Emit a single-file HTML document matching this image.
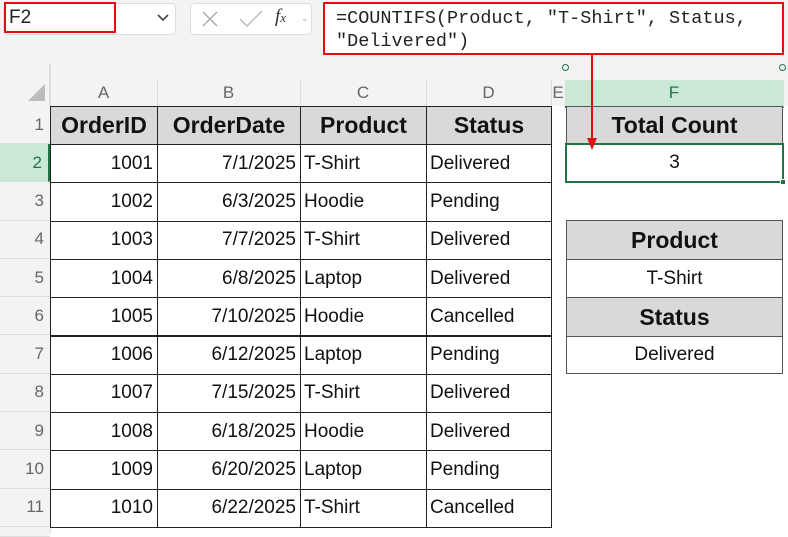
<!DOCTYPE html><html><head><style>
body{margin:0;width:788px;height:534px;background:#fff;position:relative;overflow:hidden;font-family:"Liberation Sans",Arial,sans-serif}
.a{position:absolute;box-sizing:border-box}
.c{position:absolute;box-sizing:border-box;border:1px solid #222;font-size:19px;color:#111;display:flex;align-items:center;white-space:nowrap;overflow:hidden}
.h{background:#d9d9d9;font-weight:bold;font-size:23px;justify-content:center}
.r{justify-content:flex-end;padding-right:4px}
.l{padding-left:3px}
.m{justify-content:center}
.rh{position:absolute;left:0;width:50px;text-align:right;padding-right:6px;box-sizing:border-box;color:#666;font-size:17px;display:flex;align-items:center;justify-content:flex-end;border-bottom:1px solid #ddd;background:#f3f3f3}
.ch{position:absolute;top:80px;height:26px;color:#666;font-size:17px;display:flex;align-items:center;justify-content:center;border-right:1px solid #ddd}
</style></head><body>
<div class="a" style="left:0;top:0;width:788px;height:60px;background:#f3f3f3"></div>
<div class="a" style="left:3px;top:3px;width:173px;height:32px;background:#fff;border:1px solid #ddd;border-radius:5px"></div>
<div class="a" style="left:4px;top:2px;width:112px;height:31px;border:2px solid #e01010"></div>
<div class="a" style="left:9px;top:7px;font-size:19px;color:#222">F2</div>
<svg class="a" style="left:156px;top:13px" width="14" height="10"><path d="M2 2l5 5 5-5" stroke="#444" stroke-width="1.6" fill="none"/></svg>
<div class="a" style="left:190px;top:3px;width:122px;height:32px;background:#fff;border:1px solid #ddd;border-radius:5px"></div>
<svg class="a" style="left:200px;top:9px" width="20" height="20"><path d="M3 3l14 14M17 3L3 17" stroke="#aaa" stroke-width="1.5"/></svg>
<svg class="a" style="left:238px;top:9px" width="26" height="20"><path d="M2 10l7 7L24 2" stroke="#bbb" stroke-width="1.5" fill="none"/></svg>
<div class="a" style="left:275px;top:6px;font-size:19px;font-style:italic;font-family:'Liberation Serif',serif;color:#333">f<span style="font-size:13px">x</span></div>
<div class="a" style="left:301px;top:13px;font-size:9px;color:#aaa">⌄</div>
<div class="a" style="left:323px;top:2px;width:461px;height:53px;background:#fff;border:2px solid #e01010"></div>
<div class="a" style="left:336px;top:7px;font-family:'Liberation Mono',monospace;font-size:18.5px;line-height:23px;color:#222;white-space:pre">=COUNTIFS(Product, "T-Shirt", Status,
"Delivered")</div>
<div class="a" style="left:0;top:60px;width:50px;height:474px;background:#f3f3f3"></div>
<div class="a" style="left:0;top:60px;width:788px;height:46px;background:#f3f3f3"></div>
<div class="a" style="left:49px;top:64px;width:2px;height:470px;background:#ddd"></div>
<svg class="a" style="left:28px;top:84px" width="18" height="18"><path d="M17 0V17H0Z" fill="#bbb"/></svg>
<div class="ch" style="left:50px;width:107px">A</div>
<div class="ch" style="left:157px;width:143px">B</div>
<div class="ch" style="left:300px;width:126px">C</div>
<div class="ch" style="left:426px;width:125px">D</div>
<div class="ch" style="left:551px;width:14px">E</div>
<div class="ch" style="left:565px;width:218px;background:#c9e8d5;color:#217346;border-bottom:2px solid #217346">F</div>
<div class="a" style="left:562px;top:64px;width:7px;height:7px;border:1.5px solid #217346;border-radius:50%"></div>
<div class="a" style="left:779px;top:64px;width:7px;height:7px;border:1.5px solid #217346;border-radius:50%"></div>
<div id="g"></div>
<script>
var rows=[["OrderID","OrderDate","Product","Status"],["1001","7/1/2025","T-Shirt","Delivered"],["1002","6/3/2025","Hoodie","Pending"],["1003","7/7/2025","T-Shirt","Delivered"],["1004","6/8/2025","Laptop","Delivered"],["1005","7/10/2025","Hoodie","Cancelled"],["1006","6/12/2025","Laptop","Pending"],["1007","7/15/2025","T-Shirt","Delivered"],["1008","6/18/2025","Hoodie","Delivered"],["1009","6/20/2025","Laptop","Pending"],["1010","6/22/2025","T-Shirt","Cancelled"]];
var xs=[50,157,300,426,551],h="";
for(var i=0;i<11;i++){var t=i==0?106:144+(i-1)*38.3,hh=i==0?38:38.3;
h+='<div class="rh" style="top:'+t+'px;height:'+hh+'px;'+(i==1?'background:#c9e8d5;color:#217346;border-right:2px solid #217346':'')+'">'+(i+1)+'</div>';
for(var j=0;j<4;j++){var cl=i==0?'h':(j<2?'r':'l');h+='<div class="c '+cl+'" style="left:'+xs[j]+'px;top:'+t+'px;width:'+(xs[j+1]-xs[j]+1)+'px;height:'+(hh+1)+'px">'+rows[i][j]+'</div>';}}
h+='<div class="rh" style="top:527px;height:10px"></div>';
document.getElementById('g').innerHTML=h;
</script>
<div class="c h" style="left:566px;top:106px;width:217px;height:39px;border-color:#555">Total Count</div>
<div class="c m" style="left:565px;top:143px;width:219px;height:40px;border:2px solid #217346">3</div>
<div class="a" style="left:780px;top:179px;width:6px;height:6px;background:#217346;border:1px solid #fff"></div>
<div class="c h" style="left:566px;top:220px;width:217px;height:40px;border-color:#555">Product</div>
<div class="c m" style="left:566px;top:259px;width:217px;height:39px;border-color:#555">T-Shirt</div>
<div class="c h" style="left:566px;top:297px;width:217px;height:40px;border-color:#555">Status</div>
<div class="c m" style="left:566px;top:336px;width:217px;height:38px;border-color:#555">Delivered</div>
<svg class="a" style="left:584px;top:54px" width="16" height="100"><path d="M8 0V88" stroke="#e01010" stroke-width="2"/><path d="M3 84L8 96L13 84Z" fill="#e01010"/></svg>
</body></html>
